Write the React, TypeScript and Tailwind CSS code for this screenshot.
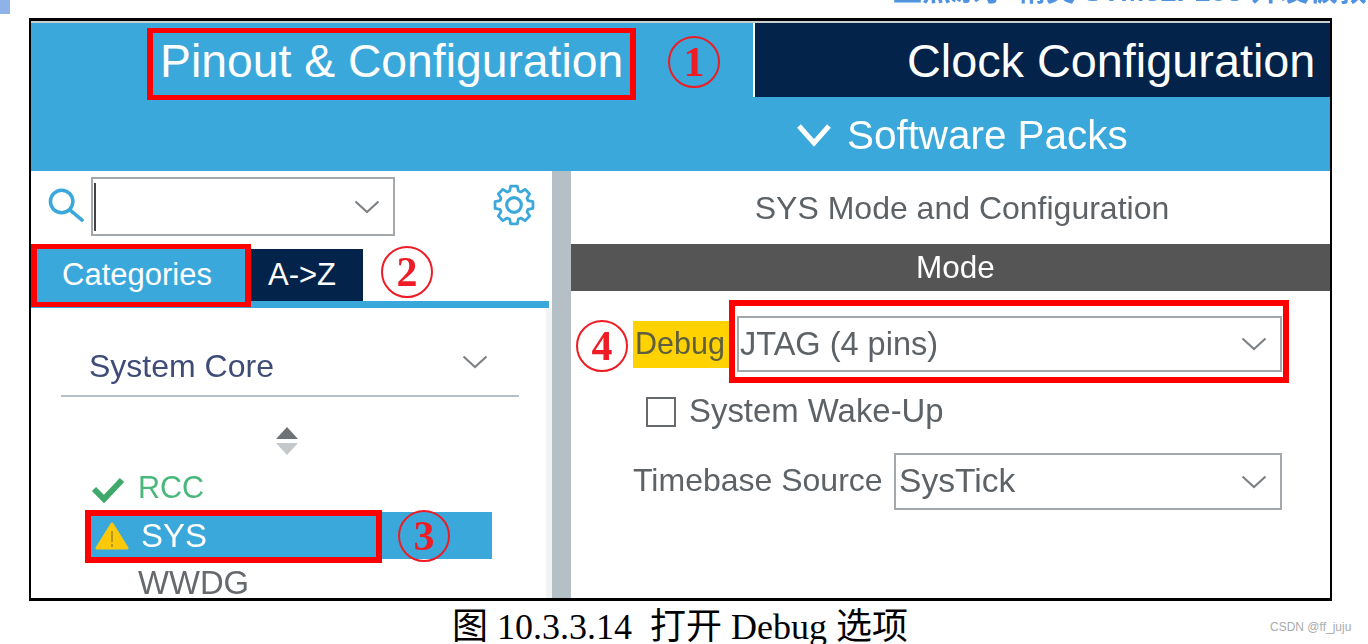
const gearPath = (() => {
  // outline of an 8 tooth gear, centre at 24,24
  const pts: string[] = [];
  for (let i = 0; i < 8; i++) {
    const a = (i * Math.PI) / 4;
    [[-0.3, 16], [-0.17, 21], [0.17, 21], [0.3, 16]].forEach(([d, r]) => {
      pts.push(`${(24 + r * Math.cos(a + d)).toFixed(1)},${(24 + r * Math.sin(a + d)).toFixed(1)}`);
    });
  }
  return pts.join(" ");
})();

const Chevron = ({ className = "" }: { className?: string }) => (
  <svg viewBox="0 0 26 14" className={`w-[26px] h-[14px] ${className}`} fill="none" stroke="#7d8286" strokeWidth="2.2">
    <polyline points="1.5,1.5 13,12 24.5,1.5" />
  </svg>
);

const Box = ({ className }: { className: string }) => (
  <div className={`absolute border-[#ff0000] ${className}`} />
);

const Num = ({ n, className }: { n: string; className: string }) => (
  <div
    className={`absolute w-[52px] h-[52px] rounded-full border-[2.5px] border-[#ee1c25] flex items-center justify-center text-[#ee1c25] text-[42px] font-bold leading-none font-['Liberation_Serif',serif] blur-[0.4px] ${className}`}
  >
    {n}
  </div>
);

const Select = ({ text, className }: { text: string; className: string }) => (
  <div className={`flex items-center justify-between border-2 border-[#a2a8ac] pr-[13px] text-[#5d6266] bg-white ${className}`}>
    <span>{text}</span>
    <Chevron />
  </div>
);

export default function App() {
  return (
    <div className="relative w-[1368px] h-[644px] overflow-hidden bg-white font-['Liberation_Sans','Noto_Sans_CJK_SC',sans-serif]">
      {/* top of the page, cut off */}
      <div className="flex h-[18px] overflow-hidden">
        <div className="shrink-0 w-[10px] h-[14px] bg-[#8fb3e8]" />
        <div className="shrink-0 ml-[883px] -mt-[26px] text-[29px] leading-[34px] font-bold text-[#4f93e0] whitespace-nowrap blur-[0.5px]">
          正点原子 精英 STM32F103 开发板教程
        </div>
      </div>

      <div className="ml-[29px] w-[1303px] h-[583px] border-x-2 border-y-[3px] border-black">
        <div className="flex flex-col h-full blur-[0.7px]">
          <div className="h-[2px] bg-[#c9ced1]" />

          <div className="flex h-[74px] bg-[#3aa8db] text-white leading-none">
            <div className="w-[724px] pl-[129px] pt-[15px] border-r-2 border-white text-[46.3px]">Pinout &amp; Configuration</div>
            <div className="flex-1 bg-[#03234b] pl-[152px] pt-[15px] text-[46.8px]">Clock Configuration</div>
          </div>

          <div className="flex items-center h-[74px] pl-[766px] pt-[2px] gap-[16px] bg-[#3aa8db] text-white text-[40.4px]">
            <svg viewBox="0 0 34 24" className="w-[34px] h-[24px]" fill="none" stroke="white" strokeWidth="5">
              <polyline points="2,3 17,20 32,3" />
            </svg>
            <span>Software Packs</span>
          </div>

          <div className="flex flex-1 min-h-0">
            <div className="w-[521px] flex flex-col">
              <div className="flex items-start h-[78px] pt-[6px] pl-[17px]">
                <svg viewBox="0 0 40 40" className="w-[39px] h-[39px] mt-[6px]" fill="none" stroke="#3aa8db" strokeWidth="3.6" strokeLinecap="round">
                  <circle cx="14" cy="19" r="11.5" />
                  <line x1="23" y1="28" x2="35" y2="38" />
                </svg>
                <div className="ml-[4px] w-[304px] h-[59px] border-2 border-[#a2a8ac] flex items-center justify-between pl-[1px] pr-[13px]">
                  <div className="w-[2px] h-[48px] bg-[#444]" />
                  <Chevron />
                </div>
                <svg viewBox="0 0 48 48" className="w-[44px] h-[44px] ml-[97px] mt-[6px]" fill="none" stroke="#3aa8db">
                  <polygon points={gearPath} strokeWidth="3" strokeLinejoin="round" />
                  <circle cx="24" cy="24" r="8" strokeWidth="3.4" />
                </svg>
              </div>

              <div className="flex h-[52px] text-white text-[31px]">
                <div className="w-[220px] h-[52px] bg-[#3aa8db] border-r-2 border-[#dfe6ea] flex items-center pl-[31px]">Categories</div>
                <div className="w-[112px] h-[52px] bg-[#03234b] flex items-center justify-center pr-[10px]">A-&gt;Z</div>
              </div>
              <div className="w-[518px] h-[7px] bg-[#3aa8db]" />

              <div className="flex-1 flex flex-col border-r-[6px] border-[#f1f3f4] overflow-hidden">
                <div className="shrink-0 mx-[30px] w-[458px] flex justify-between items-start border-b-2 border-[#b2c1cc] pt-[40px] pb-[10px] pl-[28px] pr-[31px] h-[89px]">
                  <span className="text-[32px] leading-[36px] text-[#3f4c78]">System Core</span>
                  <Chevron className="mt-[7px]" />
                </div>

                <svg viewBox="0 0 22 28" className="shrink-0 w-[22px] h-[28px] mt-[30px] ml-[245px]">
                  <polygon points="11,0 22,12 0,12" fill="#6d7276" />
                  <polygon points="11,28 22,16 0,16" fill="#c4c8ca" />
                </svg>

                <div className="shrink-0 flex flex-col ml-[56px] w-[405px] mt-[11px] leading-none">
                  <div className="flex items-center h-[46px] text-[#4ab87c] text-[30.5px]">
                    <div className="w-[51px] pl-[4px] pt-[1px]">
                      <svg viewBox="0 0 34 26" className="w-[34px] h-[26px]" fill="none" stroke="#3fa96c" strokeWidth="6">
                        <polyline points="3,12 13,22 31,3" />
                      </svg>
                    </div>
                    <span className="-mt-[3px]">RCC</span>
                  </div>
                  <div className="flex items-center h-[47px] bg-[#3aa8db] text-white text-[33px]">
                    <div className="w-[54px] pl-[8px]">
                      <svg viewBox="0 0 34 28" className="w-[34px] h-[28px]">
                        <polygon points="17,2 32,26 2,26" fill="#fcc90a" stroke="#fcc90a" strokeLinejoin="round" strokeWidth="3" />
                        <rect x="16.2" y="9" width="1.6" height="11" fill="#a98a20" />
                        <rect x="16.2" y="22" width="1.6" height="3" fill="#a98a20" />
                      </svg>
                    </div>
                    <span>SYS</span>
                  </div>
                  <div className="flex items-center h-[44px] pl-[51px] pt-[4px] text-[#666a6e] text-[32.8px]">WWDG</div>
                </div>
              </div>
            </div>

            <div className="w-[19px] bg-[#b4c0c6]" />

            <div className="flex-1 flex flex-col">
              <div className="h-[73px] flex items-center justify-center text-[32px] text-[#5d6266] pl-[23px]">SYS Mode and Configuration</div>
              <div className="h-[47px] flex items-center justify-center bg-[#545554] text-white text-[31.5px] pl-[10px]">Mode</div>

              <div className="flex items-center mt-[25px] ml-[62px] h-[56px]">
                <div className="w-[96px] h-[47px] bg-[#ffd200] flex items-center pl-[2px] text-[30.5px] text-[#5d5f40]">Debug</div>
                <Select text="JTAG (4 pins)" className="ml-[8px] w-[545px] h-[56px] text-[32.5px] pl-[1px]" />
              </div>

              <label className="flex items-center mt-[22px] ml-[75px] h-[36px] text-[32.9px] text-[#5d6266]">
                <div className="w-[30px] h-[30px] border-2 border-[#666a6e]" />
                <span className="ml-[13px] -mt-[2px]">System Wake-Up</span>
              </label>

              <div className="flex items-center mt-[23px] ml-[62px] h-[57px]">
                <span className="w-[261px] -mt-[3px] text-[32px] text-[#5d6266] whitespace-nowrap">Timebase Source</span>
                <Select text="SysTick" className="w-[388px] h-[57px] text-[33.6px] pl-[3px]" />
              </div>
            </div>
          </div>
        </div>
      </div>

      <div className="flex justify-center h-[43px] pt-[4px] ml-[-8px] font-['Liberation_Serif','Noto_Sans_CJK_SC',serif] text-[36px] leading-[44px] text-black whitespace-pre">
        图 10.3.3.14  打开 Debug 选项
      </div>

      {/* annotations */}
      <Box className="left-[147px] top-[28px] w-[489px] h-[72px] border-x-[6px] border-y-[5px]" />
      <Box className="left-[31px] top-[244px] w-[220px] h-[63px] border-x-[6px] border-y-[5px]" />
      <Box className="left-[85px] top-[510px] w-[297px] h-[53px] border-x-[6px] border-y-[6px]" />
      <Box className="left-[729px] top-[300px] w-[560px] h-[83px] border-[6px]" />
      <Num n="1" className="left-[668px] top-[36px]" />
      <Num n="2" className="left-[381px] top-[246px]" />
      <Num n="3" className="left-[398px] top-[510px]" />
      <Num n="4" className="left-[576px] top-[320px]" />

      <div className="absolute left-[1270px] top-[620px] text-[12px] leading-[14px] text-[#a9acae]">CSDN @ff_juju</div>
    </div>
  );
}
